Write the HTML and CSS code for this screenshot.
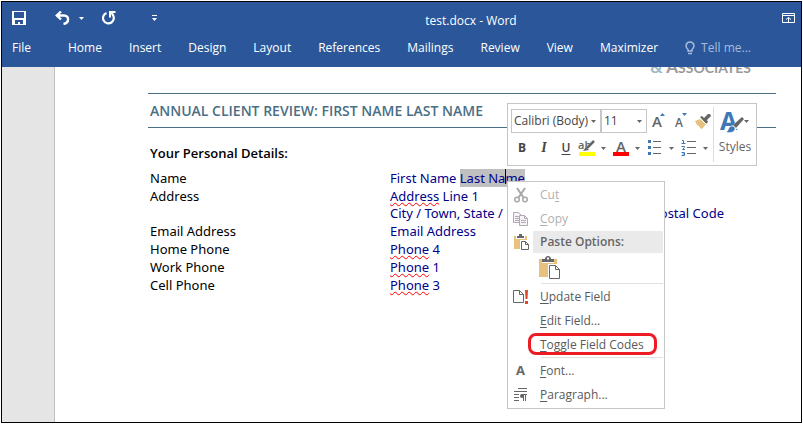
FILE: index.html
```html
<!DOCTYPE html>
<html lang="en">
<head>
<meta charset="utf-8">
<title>test.docx - Word</title>
<link rel="stylesheet" href="styles.css">
</head>
<body>
<div class="window">
  <header class="ribbon">
    <div class="titlebar">
      <div class="quick">
        <button class="q-save" aria-label="Save"><svg width="14" height="14" viewBox="0 0 14 14"><path fill="#fff" fill-rule="evenodd" d="M0 0h14v14H0zM2 1v6h10V1zM3 9v4h3v-2h2v2h3V9z"/></svg></button>
        <button class="q-undo" aria-label="Undo"><svg width="15" height="14" viewBox="0 0 15 14"><path fill="none" stroke="#fff" stroke-width="2.400" d="M6 .5L1.800 4.500L6 8.500M2 4.500h7c5.500 0 5.500 7.500-.5 8.500"/></svg></button>
        <button class="q-more" aria-label="Undo list"><svg width="5" height="3"><path fill="#fff" d="M0 0h5L2.500 3z"/></svg></button>
        <button class="q-redo" aria-label="Repeat"><svg width="14" height="14" viewBox="0 0 14 14"><path fill="none" stroke="#fff" stroke-width="2.200" d="M4.500 2A5.400 5.400 0 1 0 10.500 3.500"/><path fill="#fff" d="M7 0h6.500v2H11l1 2-1.500 1L9 3v3.500H7z"/></svg></button>
        <button class="q-custom" aria-label="Customize toolbar"><svg width="5" height="6"><path fill="#fff" d="M0 0h5v1H0zM0 3h5L2.500 6z"/></svg></button>
      </div>
      <div class="title">test.docx - Word</div>
      <button aria-label="Ribbon display options"><svg width="13" height="10" viewBox="0 0 13 10"><path fill="none" stroke="#fff" d="M.5.5h12v9H.5zM1 2.500h11M6.500 9V4.500M4 6.500l2.500-2L9 6.500"/></svg></button>
    </div>
    <nav class="tabs">
      <a class="file" href="#">File</a>
      <a href="#">Home</a><a href="#">Insert</a><a href="#">Design</a><a href="#">Layout</a><a href="#">References</a><a href="#">Mailings</a><a href="#">Review</a><a href="#">View</a><a href="#">Maximizer</a>
      <a class="tell" href="#"><svg width="10" height="14" viewBox="0 0 10 14"><path fill="none" stroke="currentColor" stroke-width="1.500" d="M3 10V8.500C0 6.500.5 1 5 1s5 5.500 2 7.500V10zM3 12.500h4"/></svg>Tell me...</a>
    </nav>
  </header>

  <main class="workspace">
    <article class="page">
      <div class="letterhead"><span class="amp">&amp;</span> A<small>SSOCIATES</small></div>
      <h1>ANNUAL CLIENT REVIEW: FIRST NAME LAST NAME</h1>
      <h2>Your Personal Details:</h2>
      <table>
        <tr><th>Name</th><td>First Name <span class="selected">Last Na<i class="caret"></i>me</span></td></tr>
        <tr><th>Address</th><td><span class="typo">Address</span> Line 1<span class="city"><span>City / Town, State /</span><span>Postal Code</span></span></td></tr>
        <tr><th>Email Address</th><td>Email Address</td></tr>
        <tr><th>Home Phone</th><td><span class="typo">Phone</span> 4</td></tr>
        <tr><th>Work Phone</th><td><span class="typo">Phone</span> 1</td></tr>
        <tr><th>Cell Phone</th><td><span class="typo">Phone</span> 3</td></tr>
      </table>
    </article>
  </main>

  <div class="minibar" role="toolbar" aria-label="Formatting">
    <div class="tools">
      <div class="row">
        <label class="combo combo-font"><select aria-label="Font"><option>Calibri (Body)</option></select><svg width="5" height="3"><path d="M0 0h5L2.500 3z"/></svg></label>
        <label class="combo combo-size"><select aria-label="Font size"><option>11</option></select><svg width="5" height="3"><path d="M0 0h5L2.500 3z"/></svg></label>
        <button class="tool" aria-label="Grow font"><svg width="16" height="18" viewBox="0 0 16 18"><text class="glyph" x="2" y="15" font-size="15">A</text><path fill="#3e78b5" d="M10 4h5l-2.500-3z"/></svg></button>
        <button class="tool" aria-label="Shrink font"><svg width="16" height="18" viewBox="0 0 16 18"><text class="glyph" x="3" y="15" font-size="12">A</text><path fill="#3e78b5" d="M10 1h5l-2.500 3z"/></svg></button>
        <button class="tool" aria-label="Format painter"><svg width="17" height="16" viewBox="0 0 17 16"><path fill="#e8c080" d="M1 8l5-2 6 5-4 5-2-1-1-2-2-1z"/><path fill="#666" d="M6 4l2-1 2 2 4-4h2l1 2-4 4 1 2-2 2z"/><path stroke="#fff" d="M6 5l6 6"/></svg></button>
      </div>
      <div class="row">
        <button class="tool bold">B</button><button class="tool italic">I</button><button class="tool under">U</button>
        <button class="drop" aria-label="Highlight"><svg width="18" height="18" viewBox="0 0 18 18"><text class="glyph" x="0" y="10" font-size="11">ab</text><path stroke="#fff" stroke-width="4" d="M9 11l8-8"/><path stroke="#666" stroke-width="2.500" d="M9 9l7-7"/><path fill="#666" d="M8 8l3 3-6 1z"/><path fill="#ff0" d="M1 13h16v4H1z"/></svg><svg width="5" height="3"><path d="M0 0h5L2.500 3z"/></svg></button>
        <button class="drop" aria-label="Font color"><svg width="18" height="18" viewBox="0 0 18 18"><text class="glyph" x="4" y="13" font-size="15">A</text><path fill="#f00" d="M1 13h16v4H1z"/></svg><svg width="5" height="3"><path d="M0 0h5L2.500 3z"/></svg></button>
        <button class="drop" aria-label="Bullets"><svg width="18" height="18" viewBox="0 0 18 18"><path fill="#3e78b5" d="M2 1h3v3H2zM2 7h3v3H2zM2 13h3v3H2z"/><path fill="#666" d="M7 2h8v1H7zM7 8h8v1H7zM7 14h8v1H7z"/></svg><svg width="5" height="3"><path d="M0 0h5L2.500 3z"/></svg></button>
        <button class="drop" aria-label="Numbering"><svg width="18" height="18" viewBox="0 0 18 18"><g fill="none" stroke="#3e78b5"><path d="M2 1.500h1.500V5M1.500 4.500h4M1.500 7.500h3v1l-2 2h2.500M1.500 13.500h3v3h-3M2.500 15h2"/></g><path fill="#666" d="M7 2h9v1H7zM7 8h9v1H7zM7 14h9v1H7z"/></svg><svg width="5" height="3"><path d="M0 0h5L2.500 3z"/></svg></button>
      </div>
    </div>
    <button class="styles"><svg width="32" height="24" viewBox="0 0 32 24"><text class="big" x="1" y="20" font-size="25">A</text><path stroke="#fff" stroke-width="5" d="M14 19L23 9"/><path fill="#666" d="M23 7l2 2-8 9-3-3z"/><path fill="#3e78b5" stroke="#fff" stroke-width=".6" d="M7 22c3-1 2-6 6-6 3 0 4 3 2 5-2 2-5 2-8 1z"/><path fill="#666" d="M25 10h5l-2.500 3z"/></svg>Styles</button>
  </div>

  <div class="menu" role="menu">
    <button class="item off" role="menuitem"><svg width="16" height="16" viewBox="0 0 16 16"><g fill="none" stroke="#a8a8a8"><path stroke-width="2" d="M4 1l6.500 9.500M12 1L5.500 10.500"/><circle cx="4" cy="12.500" r="2.300" stroke-width="1.500"/><circle cx="12" cy="12.500" r="2.300" stroke-width="1.500"/></g></svg><span>Cu<u>t</u></span></button>
    <button class="item off" role="menuitem"><svg width="16" height="16" viewBox="0 0 16 16"><g fill="#f7f2f8" stroke="#b3a9b5"><path d="M.5 1.500h5l3 3v7h-8zM2 5.500h4M2 7.500h4M2 9.500h4"/><path d="M6.500 4.500h5l3 3v7h-8zM11.500 4.500v3h3M8 9.500h5M8 11.500h5"/></g></svg><span><u>C</u>opy</span></button>
    <div class="item group"><svg width="16" height="16" viewBox="0 0 16 16"><path fill="#e8c080" d="M1 2h13v13H1z"/><path fill="#fff" d="M3 2h9v3H3zM7 6h9v10H7z"/><path fill="#666" d="M4 2h2V0h3v2h2v2H4z"/><path fill="#fff" stroke="#666" d="M8.500 7.500h4l3 3v5h-7zM12.500 7.500v3h3"/></svg><span>Paste Options:</span></div>
    <button class="paste" role="menuitem" aria-label="Keep source formatting"><svg width="22" height="24" viewBox="0 0 22 24"><path fill="#e8c080" d="M0 3h18v18H0z"/><path fill="#fff" d="M3 3h12v4H3zM9 8h13v16H9z"/><path fill="#666" d="M3 3h3V2l2-2h2l2 2v1h3v3H3z"/><path fill="#fff" d="M8 1.500h2v2H8z"/><path fill="#fff" stroke="#666" d="M10.500 9.500h6l4 4v9h-10zM16.500 9.500v4h4"/></svg></button>
    <hr>
    <button class="item" role="menuitem"><svg width="16" height="16" viewBox="0 0 16 16"><path fill="#fff" stroke="#666" d="M.5 1.500h6l4 4v8H.5zM6.500 1.500v4h4"/><path fill="#fff" d="M11 0h5v16h-5z"/><path fill="#dc4a2b" d="M12 1h3l-.5 9h-2zM12 12h3v3h-3z"/></svg><span><u>U</u>pdate Field</span></button>
    <button class="item" role="menuitem"><span><u>E</u>dit Field...</span></button>
    <button class="item marked" role="menuitem"><span><u>T</u>oggle Field Codes</span></button>
    <hr>
    <button class="item" role="menuitem"><svg width="16" height="16" viewBox="0 0 16 16"><text class="glyph strong" x="3" y="12" font-size="13">A</text></svg><span><u>F</u>ont...</span></button>
    <button class="item" role="menuitem"><svg width="16" height="16" viewBox="0 0 16 16"><path fill="none" stroke="#666" d="M5 1.500h9M1 4.500h13M1 7.500h5M1 10.500h5M1 13.500h5M10.500 7v7M12.500 7v7M8 7.500h6"/><circle cx="9" cy="9" r="2" fill="#666"/></svg><span><u>P</u>aragraph...</span></button>
  </div>
</div>
</body>
</html>
```
FILE: styles.css
```css
* { box-sizing: border-box; }
body {
  margin: 1px;
  background: #fff;
  font: 12px/16px "Open Sans", "Noto Sans", sans-serif;
  color: #444;
}
button {
  margin: 0;
  padding: 0;
  border: 0;
  background: none;
  font: inherit;
  color: inherit;
}
svg { display: block; flex: none; }
a { color: inherit; text-decoration: none; }

.window {
  position: relative;
  display: flex;
  flex-direction: column;
  min-height: calc(100vh - 2px);
  border: 1px solid #000;
  overflow: hidden;
}

/* Ribbon */
.ribbon { background: #2b579a; color: #fff; padding-bottom: 11px; }
.titlebar { display: flex; align-items: center; height: 38px; padding: 0 6px 0 10px; }
.titlebar > button { margin-bottom: 6px; }
.quick { display: flex; align-items: center; width: 148px; margin-bottom: 6px; }
.q-undo { margin-left: 29px; }
.q-more { margin-left: 9px; }
.q-redo { margin-left: 18px; }
.q-custom { margin-left: 36px; }
.title { flex: 1; text-align: center; }
.tabs { display: flex; gap: 27px; padding-left: 10px; white-space: nowrap; }
.file { width: 29px; }
.tell { display: flex; align-items: center; gap: 6px; color: #a6bbdc; }

/* Document */
.workspace { flex: 1; display: flex; padding-left: 52px; background: #e5e5e5; }
.page {
  flex: 1;
  padding: 0 25px 0 93px;
  border-left: 1px solid #c0c0c0;
  background: #fff;
  color: #000;
  font: 13px/18px "Noto Sans", sans-serif;
}
.letterhead {
  height: 26px;
  padding-right: 25px;
  overflow: hidden;
  text-align: right;
  font: bold 17px/0 Lato, sans-serif;
  color: #999;
}
.letterhead small { font-size: 14px; }
.amp { color: #9fb8c6; }
h1 {
  margin: 0;
  padding: 0 2px;
  border: solid #4a6f85;
  border-width: 1px 0;
  font: 600 14px/33px "Open Sans", sans-serif;
  color: #4a6f85;
}
h2 { margin: 16px 2px 7px; font: 600 13px/18px "Open Sans", sans-serif; }
table { border-spacing: 0; white-space: nowrap; }
th, td { padding: 0; vertical-align: top; text-align: left; }
th { width: 242px; padding-left: 2px; font-weight: normal; }
td { color: #00008b; }
.selected { position: relative; display: inline-block; background: #c0c0c0; }
.caret { position: absolute; height: 15px; border-left: 1px solid #000; }
.typo { text-decoration: underline wavy #f00 1px; text-underline-offset: 1px; }
.city { display: flex; justify-content: space-between; width: 334px; line-height: 17px; }

/* Floating format bar */
.minibar {
  position: absolute;
  top: 101px;
  left: 505px;
  display: flex;
  width: 250px;
  padding: 3px 0 3px 3px;
  border: 1px solid #c6c6c6;
  background: #fff;
}
.tools { padding-top: 2px; border-right: 1px solid #ddd; }
.row { display: flex; align-items: center; height: 24px; margin-bottom: 3px; }
.row + .row { margin-bottom: 2px; }
.combo { position: relative; display: flex; align-items: center; height: 24px; padding-right: 4px; border: 1px solid #c6c6c6; }
.combo-font { width: 90px; }
.combo-size { width: 46px; }
.combo select { flex: 1; min-width: 0; padding: 0 0 0 2px; border: 0; appearance: none; background: none; font: inherit; color: #444; }
.combo path, .drop > svg + svg { fill: #666; }
.tool { display: flex; justify-content: center; width: 22px; }
.bold { font-weight: bold; }
.italic { font: italic bold 14px/16px "Liberation Serif", serif; }
.under { font-weight: 600; text-decoration: underline; text-underline-offset: 2px; }
.drop { display: flex; align-items: center; gap: 5px; width: 34px; padding-left: 1px; }
.glyph { font-family: "Open Sans", sans-serif; font-weight: 600; fill: #666; }
.strong { font-weight: bold; }
.big { font-family: "Open Sans", sans-serif; font-weight: bold; fill: #3e78b5; }
.styles { flex: 1; display: flex; flex-direction: column; align-items: center; gap: 5px; padding-top: 3px; color: #666; }

/* Context menu */
.menu {
  position: absolute;
  top: 179px;
  left: 505px;
  width: 158px;
  padding: 1px;
  border: 1px solid #c6c6c6;
  background: #fff;
}
.item { position: relative; display: flex; align-items: center; width: 100%; height: 24px; padding-left: 4px; color: #5a5a5a; }
.item span { position: absolute; left: 31px; white-space: nowrap; }
.item u { text-underline-offset: 2px; }
.off { color: #b0b0b0; }
.group { height: 22px; font-weight: 600; color: #666; background: linear-gradient(to right, #fff 24px, #eaeaea 24px); }
.paste { display: flex; align-items: center; height: 30px; padding-left: 30px; }
hr { height: 1px; margin: 0 0 1px 32px; border: 0; background: #e0e0e0; }
.marked::after {
  content: "";
  position: absolute;
  inset: 0 6px 2px 19px;
  border: 3px solid #ed1c24;
  border-radius: 8px;
}
```
